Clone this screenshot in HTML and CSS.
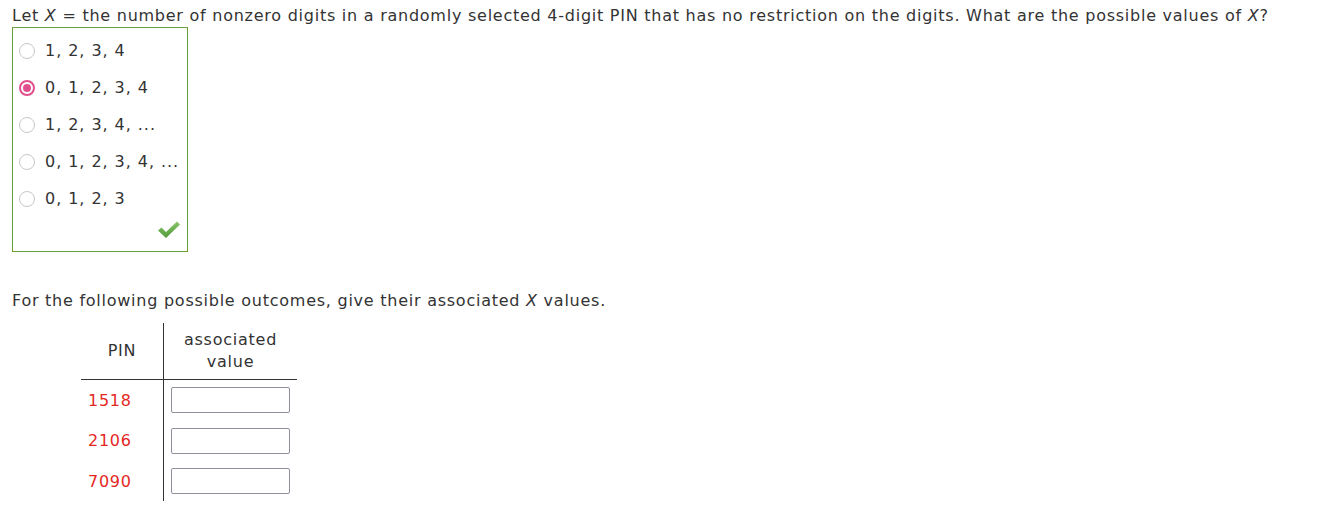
FILE: index.html
```html
<!DOCTYPE html>
<html>
<head>
<meta charset="utf-8">
<link rel="stylesheet" href="styles.css">
</head>
<body>
<div class="q">Let <i>X</i> = the number of nonzero digits in a randomly selected 4-digit PIN that has no restriction on the digits. What are the possible values of <i>X</i>?</div>
<div class="box">
  <div class="opt"><span class="radio"></span><span class="lbl">1, 2, 3, 4</span></div>
  <div class="opt"><span class="radio on"></span><span class="lbl">0, 1, 2, 3, 4</span></div>
  <div class="opt"><span class="radio"></span><span class="lbl">1, 2, 3, 4, ...</span></div>
  <div class="opt"><span class="radio"></span><span class="lbl">0, 1, 2, 3, 4, ...</span></div>
  <div class="opt"><span class="radio"></span><span class="lbl">0, 1, 2, 3</span></div>
  <div class="check">
    <svg width="24" height="20" viewBox="0 0 24 20">
      <defs><linearGradient id="g" x1="0" y1="0" x2="0" y2="1"><stop offset="0" stop-color="#8cc46a"/><stop offset="1" stop-color="#4f9a3a"/></linearGradient></defs>
      <path d="M1 10.5 L4.5 7.5 L9 12 L20 1.5 L23 4.5 L9 18 Z" fill="url(#g)"/>
    </svg>
  </div>
</div>
<div class="q2">For the following possible outcomes, give their associated <i>X</i> values.</div>
<table class="tbl">
  <tr class="head"><th class="c1">PIN</th><th class="c2">associated<br>value</th></tr>
  <tr class="first"><td class="c1 pin">1518</td><td class="c2"><span class="inp"></span></td></tr>
  <tr class="mid"><td class="c1 pin">2106</td><td class="c2"><span class="inp"></span></td></tr>
  <tr class="last"><td class="c1 pin">7090</td><td class="c2"><span class="inp"></span></td></tr>
</table>
</body>
</html>
```
FILE: styles.css
```css
body {
  margin: 0;
  padding: 4px 12px;
  font-family: "DejaVu Sans", Verdana, sans-serif;
  font-size: 16px;
  letter-spacing: 0.75px;
  color: #333;
  background: #fff;
}
.q { line-height: 23px; }
.q i, .q2 i { font-style: italic; }
.box {
  width: 174px;
  height: 219px;
  border: 1px solid #6b9e3c;
  position: relative;
  box-sizing: content-box;
  padding-top: 4px;
}
.opt {
  display: flex;
  align-items: center;
  height: 37px;
  padding-left: 6px;
}
.lbl { letter-spacing: 0.95px; }
.radio {
  width: 16px;
  height: 16px;
  border: 1.5px solid #c8c8cc;
  border-radius: 50%;
  box-sizing: border-box;
  margin-right: 10px;
  position: relative;
}
.radio.on { border-color: #e0508e; border-width: 2px; }
.radio.on::after {
  content: "";
  position: absolute;
  left: 2px; top: 2px;
  width: 8px; height: 8px;
  border-radius: 50%;
  background: #e0508e;
}
.check { position: absolute; right: 6px; bottom: 7px; }
.q2 { margin-top: 37px; line-height: 23px; }
.tbl {
  margin-left: 69px;
  margin-top: 11px;
  border-collapse: collapse;
}
.tbl th { font-weight: normal; line-height: 22px; }
.tbl .head th { padding: 5px 0 5px; height: 46px; }
.tbl th.c1 { width: 82px; text-align: center; }
.tbl th.c2 { width: 133px; text-align: center; }
.tbl .c1 { border-right: 1px solid #333; }
.tbl .head th { border-bottom: 1px solid #333; }
.tbl td { height: 40px; padding: 0; vertical-align: middle; }
.tbl tr.mid td { height: 41px; }
.tbl td.pin { color: #e4281f; text-align: left; padding-left: 7px; }
.tbl td.c2 { padding-left: 7px; }
.inp {
  display: block;
  width: 119px;
  height: 26px;
  border: 1px solid #8f8f9d;
  border-radius: 2px;
  box-sizing: border-box;
}
```
